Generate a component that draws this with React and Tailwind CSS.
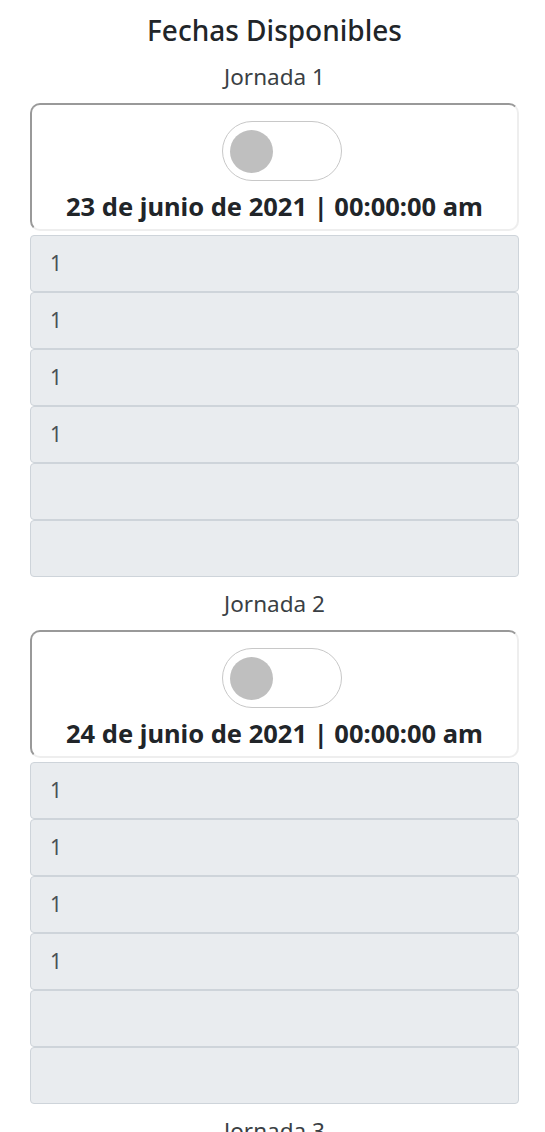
import React from "react";

const font = { fontFamily: '"Noto Sans", "Open Sans", sans-serif' };

function Toggle() {
  return (
    <div className="ml-[15px] w-[120px] h-[60px] rounded-full border border-[#c8c8c8] bg-white flex items-center pl-[7px]">
      <div className="w-[43px] h-[43px] rounded-full bg-[#bfbfbf]" />
    </div>
  );
}

function Section({ n, date }) {
  const rows = ["1", "1", "1", "1", "", ""];
  return (
    <div className="flex flex-col">
      <div className="text-center text-[22.5px] leading-[30px] text-[#3a3f44]">Jornada {n}</div>
      <div className="mt-[11px] h-[128px] rounded-[10px] border-2 border-t-[#999999] border-l-[#999999] border-b-[#eeeeee] border-r-[#eeeeee] bg-white flex flex-col items-center pt-[16px]">
        <Toggle />
        <div className="mt-[11px] text-[25.5px] leading-[29px] font-bold text-[#212529] whitespace-nowrap">
          {date}
        </div>
      </div>
      <div className="mt-[4px] flex flex-col">
        {rows.map((r, i) => (
          <div
            key={i}
            className="h-[57px] rounded-[4px] border border-[#ced4da] bg-[#e9ecef] flex items-center pl-[19px] text-[21px] text-[#495057]"
          >
            {r}
          </div>
        ))}
      </div>
    </div>
  );
}

export default function App() {
  return (
    <div className="bg-white min-h-[1132px]" style={font}>
      <div className="ml-[30px] w-[489px] pt-[13px] flex flex-col gap-[12px]">
        <h1 className="text-center text-[28px] leading-[34px] font-medium text-[#212529] mb-[3px]">
          Fechas Disponibles
        </h1>
        <Section n={1} date="23 de junio de 2021 | 00:00:00 am" />
        <Section n={2} date="24 de junio de 2021 | 00:00:00 am" />
        <Section n={3} date="25 de junio de 2021 | 00:00:00 am" />
      </div>
    </div>
  );
}
